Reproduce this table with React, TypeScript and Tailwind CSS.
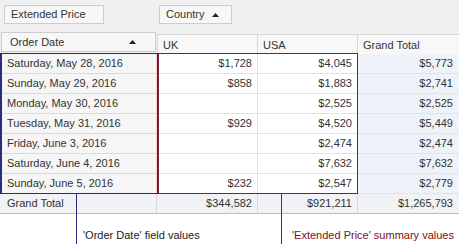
import React from 'react';

const rows = [
  { date: 'Saturday, May 28, 2016', uk: '$1,728', usa: '$4,045', total: '$5,773' },
  { date: 'Sunday, May 29, 2016', uk: '$858', usa: '$1,883', total: '$2,741' },
  { date: 'Monday, May 30, 2016', uk: '', usa: '$2,525', total: '$2,525' },
  { date: 'Tuesday, May 31, 2016', uk: '$929', usa: '$4,520', total: '$5,449' },
  { date: 'Friday, June 3, 2016', uk: '', usa: '$2,474', total: '$2,474' },
  { date: 'Saturday, June 4, 2016', uk: '', usa: '$7,632', total: '$7,632' },
  { date: 'Sunday, June 5, 2016', uk: '$232', usa: '$2,547', total: '$2,779' },
];

const cols = 'grid grid-cols-[157px_101px_100px_101px]';

function Arrow() {
  return (
    <svg width="7" height="4" viewBox="0 0 7 4" className="shrink-0">
      <path d="M0 4 L3.5 0 L7 4 Z" fill="#222" />
    </svg>
  );
}

export default function App() {
  return (
    <div className="relative w-[459px] h-[244px] overflow-hidden bg-white text-[11px] leading-none text-[#333] font-['Liberation_Sans',Arial,sans-serif]">
      {/* Filter / column field area */}
      <div className={`${cols} h-[29px] bg-[#f0f0f0]`}>
        <div className="pl-[4px] pt-[5px]">
          <div className="flex items-center w-[100px] h-[19px] pl-[6px] bg-[#f7f7f7] border border-[#cdcdcd]">
            Extended Price
          </div>
        </div>
        <div className="col-span-3 pl-[2px] pt-[5px]">
          <div className="flex items-center gap-[7px] w-[73px] h-[19px] pl-[6px] bg-[#f7f7f7] border border-[#cdcdcd]">
            Country <Arrow />
          </div>
        </div>
      </div>

      {/* Header row */}
      <div className={`${cols} h-[25px] bg-[#f0f0f0]`}>
        <div className="pl-[1px] pt-[3px]">
          <div className="flex items-center justify-between w-[155px] h-[20px] pl-[8px] pr-[19px] bg-[#f7f7f7] border border-[#cdcdcd]">
            Order Date <Arrow />
          </div>
        </div>
        <div className="col-span-3 pt-[5px] flex">
          <div className="w-[101px] h-[20px] flex items-center pl-[5px] pt-[1px] bg-[#f8f8f8] border-t border-l border-r border-[#d6d6d6]">UK</div>
          <div className="w-[100px] h-[20px] flex items-center pl-[5px] pt-[1px] bg-[#f8f8f8] border-t border-r border-[#d6d6d6]">USA</div>
          <div className="w-[101px] h-[20px] flex items-center pl-[5px] pt-[1px] bg-[#f8f8f8] border-t border-[#d6d6d6]">Grand Total</div>
        </div>
      </div>

      {/* Data rows */}
      {rows.map((r) => (
        <div key={r.date} className={`${cols} h-[20px]`}>
          <div className="flex items-center pl-[7px] bg-[#f6f6f6] border-b border-r border-[#dadada]">{r.date}</div>
          <div className="flex items-center justify-end pr-[5px] bg-white border-b border-r border-[#e2e2e2]">{r.uk}</div>
          <div className="flex items-center justify-end pr-[5px] bg-white border-b border-r border-[#e2e2e2]">{r.usa}</div>
          <div className="flex items-center justify-end pr-[6px] bg-[#eef2f9] border-b border-[#dfe3ea]">{r.total}</div>
        </div>
      ))}

      {/* Grand total row */}
      <div className={`${cols} h-[20px] bg-[#f1f2f5] border-b border-[#bdbdbd]`}>
        <div className="flex items-center pl-[7px] border-r border-[#dadada]">Grand Total</div>
        <div className="flex items-center justify-end pr-[5px] border-r border-[#dadada]">$344,582</div>
        <div className="flex items-center justify-end pr-[5px] border-r border-[#dadada]">$921,211</div>
        <div className="flex items-center justify-end pr-[6px]">$1,265,793</div>
      </div>

      {/* Annotation labels */}
      <div className="flex pt-[16px]">
        <span className="ml-[83px] w-[209px] text-[#222]">'Order Date' field values</span>
        <span className="text-[#7a1020]">'Extended Price' summary values</span>
      </div>

      {/* Highlight frames and leader lines */}
      <div className="absolute left-0 top-[53px] w-[158px] h-[141px] border border-l-2 border-[#2b2b84] pointer-events-none" />
      <div className="absolute left-[158px] top-[53px] w-[200px] h-[141px] border border-[#8a1b2c] pointer-events-none" />
      <div className="absolute left-[76px] top-[194px] w-px h-[50px] bg-[#2b2b84]" />
      <div className="absolute left-[281px] top-[194px] w-px h-[50px] bg-[#8a1b2c]" />
    </div>
  );
}
